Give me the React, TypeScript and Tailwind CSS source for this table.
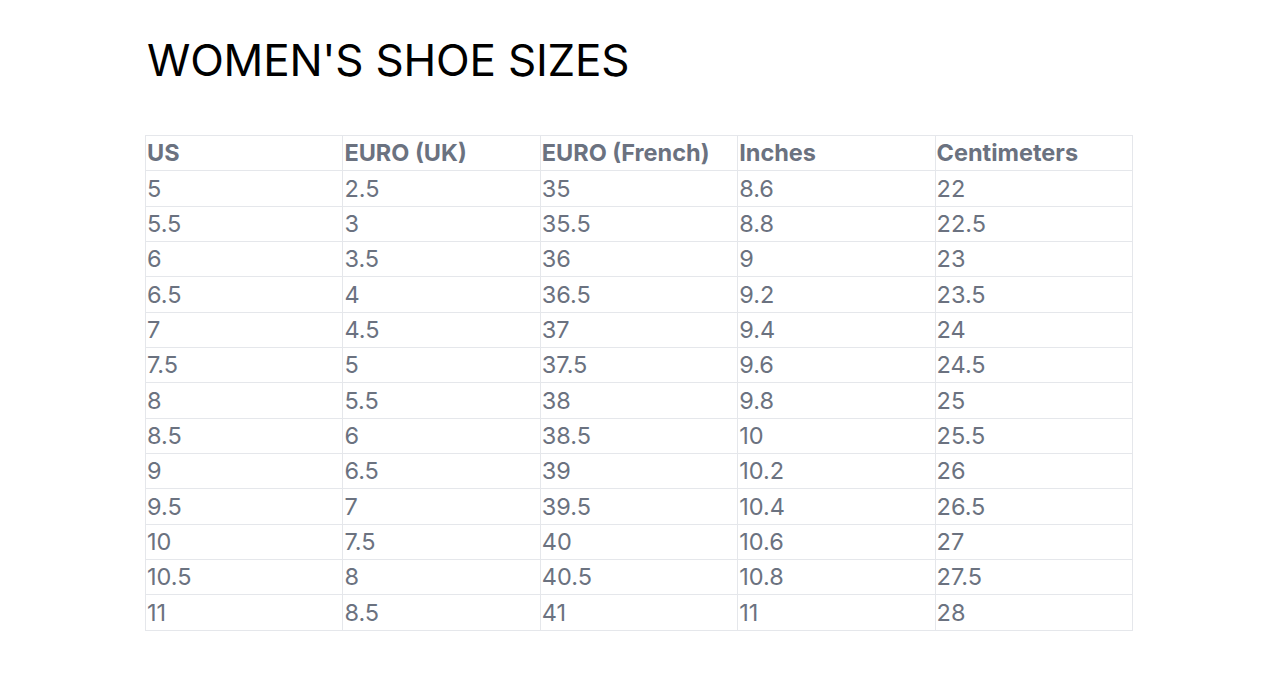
const headers = ['US', 'EURO (UK)', 'EURO (French)', 'Inches', 'Centimeters'];

const rows: string[][] = [
  ['5', '2.5', '35', '8.6', '22'],
  ['5.5', '3', '35.5', '8.8', '22.5'],
  ['6', '3.5', '36', '9', '23'],
  ['6.5', '4', '36.5', '9.2', '23.5'],
  ['7', '4.5', '37', '9.4', '24'],
  ['7.5', '5', '37.5', '9.6', '24.5'],
  ['8', '5.5', '38', '9.8', '25'],
  ['8.5', '6', '38.5', '10', '25.5'],
  ['9', '6.5', '39', '10.2', '26'],
  ['9.5', '7', '39.5', '10.4', '26.5'],
  ['10', '7.5', '40', '10.6', '27'],
  ['10.5', '8', '40.5', '10.8', '27.5'],
  ['11', '8.5', '41', '11', '28'],
];

export default function App() {
  return (
    <div className="min-h-screen bg-white font-['Inter',sans-serif]">
      <div className="ml-[145px] w-[988px] pt-[34px]">
        <h1 className="pl-[2px] text-[44px] leading-[52px] font-normal tracking-[-0.2px] text-black">WOMEN'S SHOE SIZES</h1>

        <table className="mt-[49px] w-full table-fixed border-collapse text-[23.5px] leading-[28px] text-[#6b7280]">
          <thead>
            <tr className="h-[35.35px]">
              {headers.map((h) => (
                <th key={h} className="border border-[#e5e7eb] px-px py-0 text-left font-bold">
                  {h}
                </th>
              ))}
            </tr>
          </thead>
          <tbody>
            {rows.map((row, i) => (
              <tr key={i} className="h-[35.35px]">
                {row.map((cell, j) => (
                  <td key={j} className="border border-[#e5e7eb] px-px py-0">
                    {cell}
                  </td>
                ))}
              </tr>
            ))}
          </tbody>
        </table>
      </div>
    </div>
  );
}
